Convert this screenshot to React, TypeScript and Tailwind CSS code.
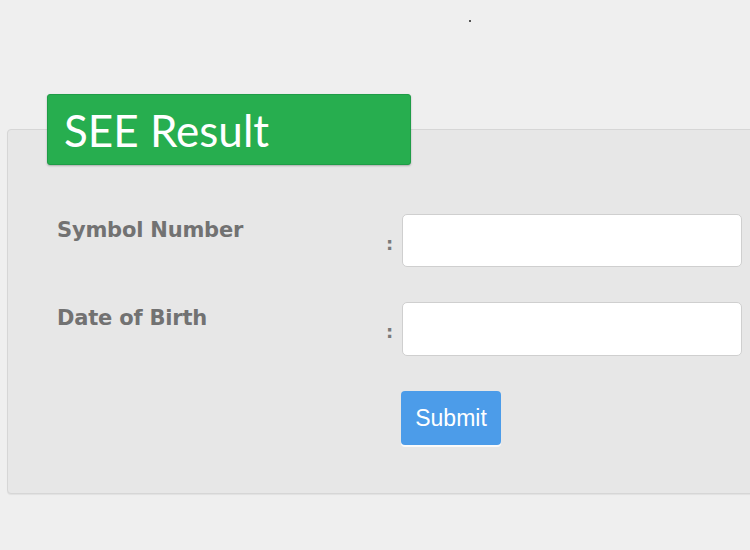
export default function App() {
	return (
		<div className="h-[550px] w-[750px] overflow-hidden bg-[#efefef]">
			{/* stray dot near the top */}
			<div className="h-[94px] pt-[20px] pl-[469px]">
				<div className="h-[2px] w-[2px] bg-[#555]" />
			</div>

			<div className="ml-[7px] mt-[35px] w-[780px] rounded-[4px] border border-[#d6d6d6] bg-[#e7e7e7] pb-[48px] pl-[49px] shadow-[0_1px_1px_rgba(0,0,0,0.06)]">
				{/* header badge */}
				<div className="-mt-[36px] -ml-[10px] flex h-[71px] w-[364px] items-center rounded-[3px] border border-[#1f9c47] bg-[#27ae4f] pl-[16px] shadow-[0_1px_2px_rgba(0,0,0,0.25)]">
					<span className="font-['Lato',sans-serif] text-[44px] leading-none text-white">SEE Result</span>
				</div>

				<div className="mt-[49px] flex flex-col gap-[35px] font-['DejaVu_Sans',sans-serif]">
					<div className="flex">
						<div className="w-[329px] pt-[1px] text-[21px] font-bold tracking-[-0.2px] text-[#727272]">Symbol Number</div>
						<div className="flex w-[16px] items-center pt-[5px] text-[18px] font-bold text-[#7a7a7a]">:</div>
						<input className="h-[53px] w-[340px] rounded-[5px] border border-[#cfcfcf] bg-white outline-none" />
					</div>
					<div className="flex">
						<div className="w-[329px] pt-[1px] text-[21px] font-bold tracking-[-0.2px] text-[#727272]">Date of Birth</div>
						<div className="flex w-[16px] items-center pt-[5px] text-[18px] font-bold text-[#7a7a7a]">:</div>
						<input className="h-[54px] w-[340px] rounded-[5px] border border-[#cfcfcf] bg-white outline-none" />
					</div>
					<div className="pl-[344px]">
						<button className="h-[54px] w-[100px] rounded-[4px] bg-[#4c9ce9] font-['Liberation_Sans',sans-serif] text-[23px] text-white shadow-[0_2px_0_#fafafa]">
							Submit
						</button>
					</div>
				</div>
			</div>
		</div>
	);
}
